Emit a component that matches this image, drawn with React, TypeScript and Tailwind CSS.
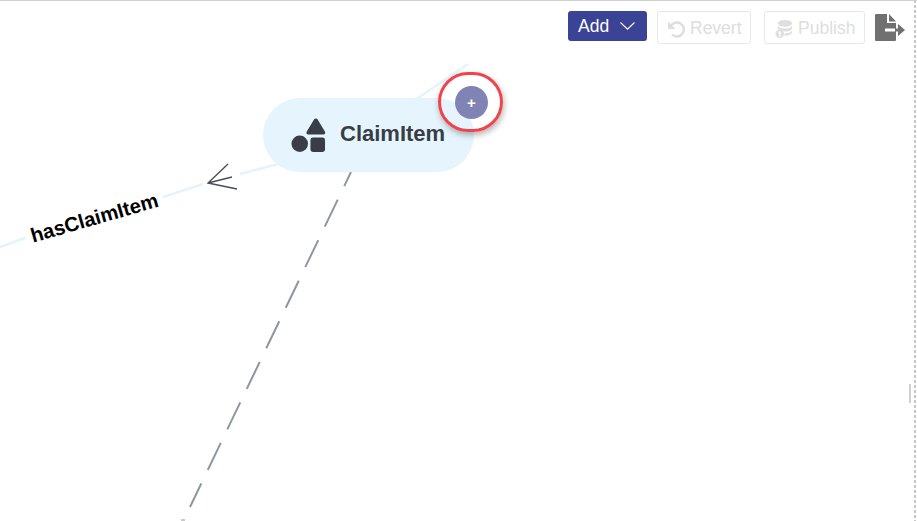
const font = { fontFamily: '"Liberation Sans", Arial, sans-serif' };

function GraphEdges() {
  return (
    <svg className="absolute inset-0" width="917" height="521" viewBox="0 0 917 521" fill="none">
      {/* edge going up to the right, behind the node */}
      <path d="M415 100L468 64" stroke="#e4f4fd" strokeWidth="2.5" />
      {/* hasClaimItem edge */}
      <path d="M282 163L240 174" stroke="#e4f4fd" strokeWidth="2.5" />
      <path d="M203 184L163 197" stroke="#e4f4fd" strokeWidth="2.5" />
      <path d="M25 238L0 247" stroke="#e4f4fd" strokeWidth="2.5" />
      <path d="M228 164L208 183L237 189M208 183L232 177" stroke="#4b4f55" strokeWidth="1.4" />
      {/* dashed edge */}
      <path d="M351 172L190 507" stroke="#8f96a3" strokeWidth="2" strokeDasharray="30 15" strokeDashoffset="14.4" />
      <path d="M181 520L185 520" stroke="#8f96a3" strokeWidth="1" />
    </svg>
  );
}

function ShapesIcon() {
  return (
    <svg width="35" height="35" viewBox="0 0 36 36" fill="#383d47">
      <circle cx="9" cy="26.5" r="8.5" />
      <path d="M25.500 0.500a2.200 2.200 0 0 1 1.900 1.100L35 14.200c.7 1.200-.1 2.800-1.600 2.800H17.600c-1.400 0-2.300-1.600-1.500-2.800l7.600-12.600a2.200 2.200 0 0 1 1.800-1.100z" />
      <rect x="20" y="20" width="15" height="15" rx="2.500" />
    </svg>
  );
}

function ClaimNode() {
  return (
    <div className="absolute left-[263px] top-[98px] w-[211px] h-[74px] rounded-[37px] bg-[#e6f5fd] flex items-center pl-[28px] gap-[14px]">
      <ShapesIcon />
      <span className="pb-[2px] text-[22px] font-bold text-[#383d47] leading-none">ClaimItem</span>
    </div>
  );
}

function AddHandle() {
  return (
    <div className="absolute left-[438px] top-[72px] w-[65px] h-[60px] rounded-full border-[3px] border-[#f0434b] shadow-[1px_3px_6px_rgba(0,0,0,0.3)] flex items-center justify-center pl-[2px]">
      <div className="w-[33px] h-[33px] rounded-full bg-[#8084b5] flex items-center justify-center text-white text-[15px] font-bold leading-none">
        +
      </div>
    </div>
  );
}

function Toolbar() {
  return (
    <div className="relative flex justify-end items-start pt-[10px] pr-[12px]">
      <button className="w-[79px] h-[30px] rounded-[3px] bg-[#3a4396] text-white text-[17.5px] flex items-center pl-[10px] gap-[11px]">
        Add
        <svg width="15" height="8" viewBox="0 0 15 8" fill="none" stroke="#ffffff" strokeWidth="1.1">
          <path d="M0.500 0.500L7.500 7.200L14.500 0.500" />
        </svg>
      </button>
      <button className="ml-[10px] w-[94px] h-[33px] rounded-[3px] border border-[#e8e8e8] text-[#dedede] text-[17.5px] flex items-center pl-[9px] pt-[2px] gap-[5px]">
        <svg width="18" height="18" viewBox="0 0 18 18" fill="none" stroke="#dedede" strokeWidth="2.400">
          <path d="M3.500 6.500a7 7 0 1 1 1.500 8" />
          <path d="M1 1.500V9H8.500z" fill="#dedede" strokeWidth="0" />
        </svg>
        Revert
      </button>
      <button className="ml-[13px] w-[101px] h-[33px] rounded-[3px] border border-[#e8e8e8] text-[#dedede] text-[17.5px] flex items-center pl-[10px] pt-[2px] gap-[4px]">
        <svg width="19" height="20" viewBox="0 0 20 20" fill="#dedede">
          <ellipse cx="10.500" cy="4" rx="7.500" ry="3.500" />
          <path d="M3 6.500c1 2 4 3 7.500 3s6.500-1 7.500-3v3c-1 2-4 3-7.500 3-1 0-2 0-3-.3A5 5 0 0 0 3 10.500z" />
          <path d="M10 14.500c3.500.3 7-.8 8-3v2.500c-1 2-4 3-8 3z" />
          <circle cx="5" cy="15" r="4.500" />
          <path d="M5 11.800l2.300 2.700H5.800V18H4.200v-3.500H2.700z" fill="#fff" />
        </svg>
        Publish
      </button>
      <svg className="ml-[10px] mt-[3px]" width="30" height="28" viewBox="0 0 30 28" fill="#707070">
        <path d="M1 0h11v9h9v17a1 1 0 0 1-1 1H1a1 1 0 0 1-1-1V1a1 1 0 0 1 1-1z" />
        <path d="M14 0l7 7.500h-7z" />
        <rect x="10" y="14.500" width="10" height="3" fill="#ffffff" />
        <rect x="20" y="14.500" width="4" height="3" />
        <path d="M23 10l7 6-7 6z" />
      </svg>
    </div>
  );
}

export default function App() {
  return (
    <div className="relative w-[917px] h-[521px] overflow-hidden bg-white border-t border-[#d0d0d0] box-border" style={font}>
      <div className="absolute -top-px left-0 w-[917px] h-[521px]">
        <GraphEdges />
        <ClaimNode />
        <AddHandle />
        <div className="absolute left-[31px] top-[226px] -rotate-[16deg] origin-left text-[20.3px] font-bold text-black leading-none">
          hasClaimItem
        </div>
        <div className="absolute left-[909px] top-[384px] w-[2px] h-[19px] bg-[#d0d0d0]" />
        <div className="absolute left-[914px] top-0 w-[2px] h-[521px] bg-[repeating-linear-gradient(to_bottom,#c8c8c8_0,#c8c8c8_3px,transparent_3px,transparent_5px)]" />
      </div>
      <Toolbar />
    </div>
  );
}
